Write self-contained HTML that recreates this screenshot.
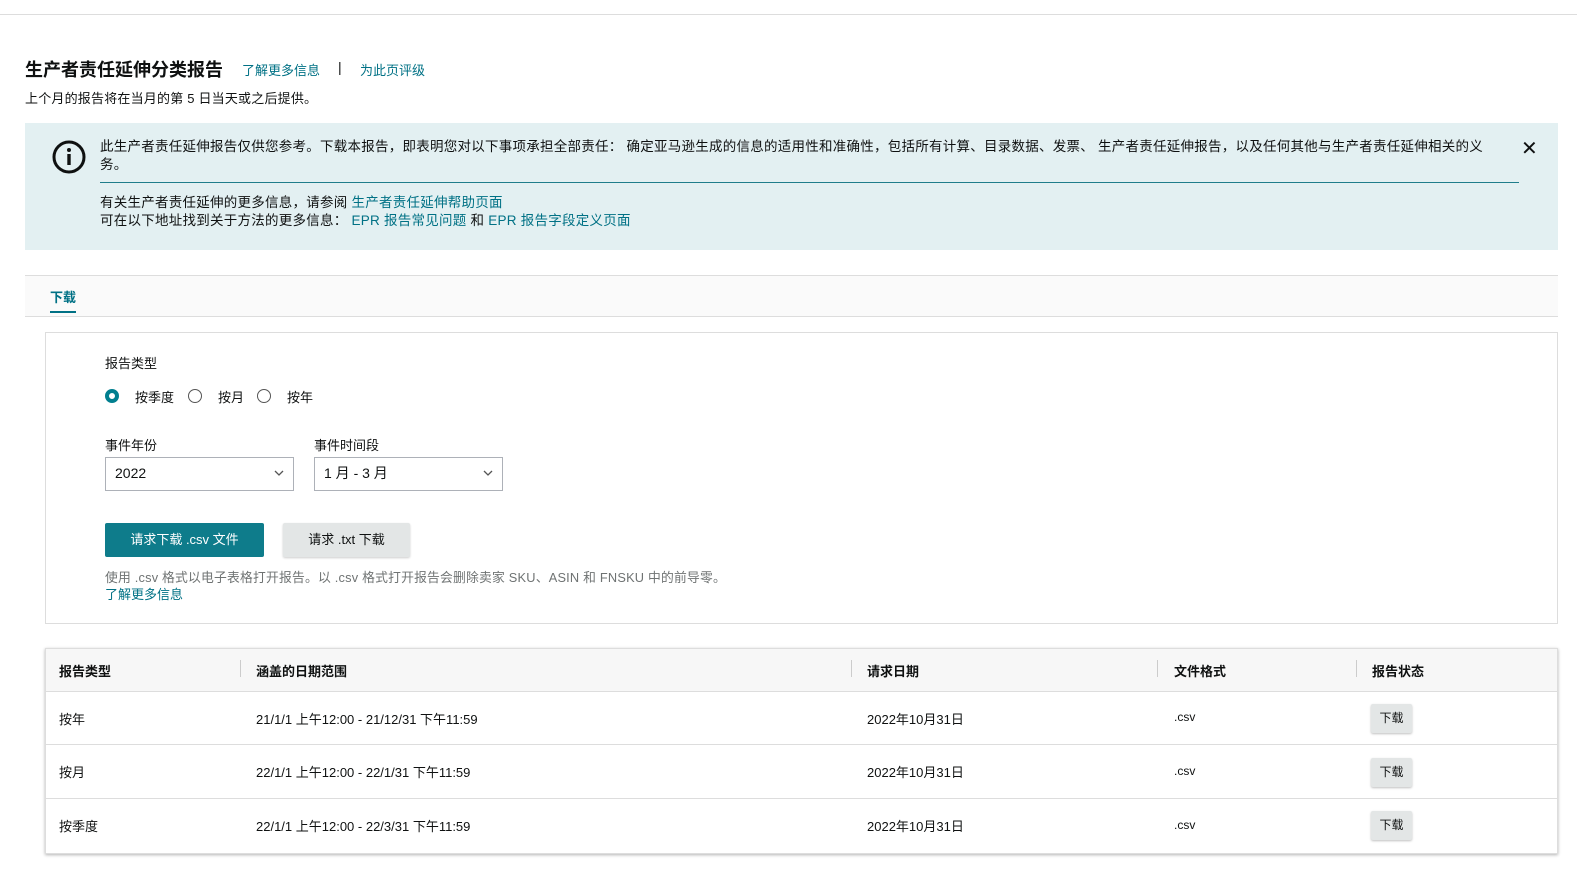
<!DOCTYPE html>
<html><head><meta charset="utf-8"><style>
*{box-sizing:border-box;margin:0;padding:0}
body{width:1577px;height:886px;background:#fff;font-family:"Liberation Sans","Noto Sans CJK SC",sans-serif;color:#0f1111;position:relative;overflow:hidden;font-size:13px}
.a{position:absolute;white-space:nowrap}
.lk{color:#007185}
.sel{position:absolute;height:34px;width:189px;border:1px solid #adb1b8;background:#fff;padding:0 9px;line-height:31px;font-size:14px}
.sel svg{position:absolute;right:9px;top:12px}
.radio{position:absolute;width:14px;height:14px;border-radius:50%;border:1px solid #555}
.row{position:absolute;left:45px;width:1512px;height:53px;border-top:1px solid #ddd}
.btn{position:absolute;width:41px;height:29px;background:#e3e6e6;border-radius:2px;box-shadow:0 1px 2px rgba(0,0,0,.25);font-size:12px;text-align:center;line-height:29px;left:1371px}
</style></head><body>
<div class="a" style="left:0;top:14px;width:1577px;border-top:1px solid #ddd"></div>
<div class="a" style="left:25px;top:56px;font-size:18px;font-weight:bold">生产者责任延伸分类报告</div>
<div class="a lk" style="left:242px;top:60px;font-size:13px">了解更多信息</div>
<div class="a" style="left:338px;top:59px;font-size:14px">|</div>
<div class="a lk" style="left:360px;top:60px;font-size:13px">为此页评级</div>
<div class="a" style="left:25px;top:88px;font-size:13px;letter-spacing:0.2px">上个月的报告将在当月的第 5 日当天或之后提供。</div>

<div class="a" style="left:25px;top:123px;width:1533px;height:127px;background:#e3f0f2"></div>
<svg class="a" style="left:51px;top:139px" width="36" height="36" viewBox="0 0 36 36"><circle cx="18" cy="18" r="15" fill="none" stroke="#0f1111" stroke-width="3"/><circle cx="18" cy="11" r="2" fill="#0f1111"/><rect x="16.3" y="15" width="3.4" height="11" fill="#0f1111"/></svg>
<div class="a" style="left:100px;top:138px;font-size:13.5px;letter-spacing:0.25px;line-height:18px">此生产者责任延伸报告仅供您参考。下载本报告，即表明您对以下事项承担全部责任： 确定亚马逊生成的信息的适用性和准确性，包括所有计算、目录数据、发票、 生产者责任延伸报告，以及任何其他与生产者责任延伸相关的义<br>务。</div>
<div class="a" style="left:1521px;top:136px;font-size:20px">✕</div>
<div class="a" style="left:100px;top:182px;width:1419px;border-top:1px solid #1f7d8b"></div>
<div class="a" style="left:100px;top:191px;font-size:13.5px;letter-spacing:0.25px">有关生产者责任延伸的更多信息，请参阅 <span class="lk">生产者责任延伸帮助页面</span></div>
<div class="a" style="left:100px;top:209px;font-size:13.5px;letter-spacing:0.25px">可在以下地址找到关于方法的更多信息： <span class="lk">EPR 报告常见问题</span> 和 <span class="lk">EPR 报告字段定义页面</span></div>

<div class="a" style="left:25px;top:275px;width:1533px;height:42px;background:#fafafa;border-top:1px solid #ddd;border-bottom:1px solid #ddd"></div>
<div class="a lk" style="left:50px;top:287px;font-size:13px;font-weight:bold">下载</div>
<div class="a" style="left:50px;top:311px;width:26px;height:2px;background:#007185"></div>

<div class="a" style="left:45px;top:332px;width:1513px;height:292px;border:1px solid #ddd"></div>
<div class="a" style="left:105px;top:353px;font-size:13px">报告类型</div>
<div class="radio" style="left:105px;top:389px;border:4px solid #017f8f"></div>
<div class="a" style="left:135px;top:387px;font-size:13px">按季度</div>
<div class="radio" style="left:188px;top:389px"></div>
<div class="a" style="left:218px;top:387px;font-size:13px">按月</div>
<div class="radio" style="left:257px;top:389px"></div>
<div class="a" style="left:287px;top:387px;font-size:13px">按年</div>
<div class="a" style="left:105px;top:435px;font-size:13px">事件年份</div>
<div class="a" style="left:314px;top:435px;font-size:13px">事件时间段</div>
<div class="sel" style="left:105px;top:457px">2022<svg width="10" height="7" viewBox="0 0 10 7"><path d="M1 1l4 4 4-4" fill="none" stroke="#555" stroke-width="1.3"/></svg></div>
<div class="sel" style="left:314px;top:457px">1 月 - 3 月<svg width="10" height="7" viewBox="0 0 10 7"><path d="M1 1l4 4 4-4" fill="none" stroke="#555" stroke-width="1.3"/></svg></div>
<div class="a" style="left:105px;top:523px;width:159px;height:34px;background:#0e7c8b;color:#fff;text-align:center;line-height:33px;font-size:13px;border-radius:2px">请求下载 .csv 文件</div>
<div class="a" style="left:283px;top:523px;width:127px;height:34px;background:#e3e6e6;text-align:center;line-height:33px;font-size:13px;border-radius:2px;box-shadow:0 1px 2px rgba(0,0,0,.2)">请求 .txt 下载</div>
<div class="a" style="left:105px;top:567px;font-size:12.8px;letter-spacing:0.2px;color:#6f7373">使用 .csv 格式以电子表格打开报告。以 .csv 格式打开报告会删除卖家 SKU、ASIN 和 FNSKU 中的前导零。</div>
<div class="a lk" style="left:105px;top:584px;font-size:13px">了解更多信息</div>

<div class="a" style="left:45px;top:648px;width:1513px;height:206px;box-shadow:0 1px 3px rgba(0,0,0,.3);border:1px solid #ddd"></div>
<div class="a" style="left:46px;top:649px;width:1511px;height:42px;background:#f7f7f7"></div>
<div class="a" style="left:59px;top:661px;font-weight:bold">报告类型</div>
<div class="a" style="left:240px;top:660px;height:17px;border-left:1px solid #ccc"></div>
<div class="a" style="left:256px;top:661px;font-weight:bold">涵盖的日期范围</div>
<div class="a" style="left:851px;top:660px;height:17px;border-left:1px solid #ccc"></div>
<div class="a" style="left:867px;top:661px;font-weight:bold">请求日期</div>
<div class="a" style="left:1157px;top:660px;height:17px;border-left:1px solid #ccc"></div>
<div class="a" style="left:1174px;top:661px;font-weight:bold">文件格式</div>
<div class="a" style="left:1356px;top:660px;height:17px;border-left:1px solid #ccc"></div>
<div class="a" style="left:1372px;top:661px;font-weight:bold">报告状态</div>

<div class="row" style="top:691px"></div>
<div class="row" style="top:744px"></div>
<div class="row" style="top:798px"></div>
<div class="a" style="left:59px;top:709px">按年</div>
<div class="a" style="left:256px;top:709px">21/1/1 上午12:00 - 21/12/31 下午11:59</div>
<div class="a" style="left:867px;top:709px">2022年10月31日</div>
<div class="a" style="left:1174px;top:710px;font-size:12px">.csv</div>
<div class="btn" style="top:704px">下载</div>
<div class="a" style="left:59px;top:762px">按月</div>
<div class="a" style="left:256px;top:762px">22/1/1 上午12:00 - 22/1/31 下午11:59</div>
<div class="a" style="left:867px;top:762px">2022年10月31日</div>
<div class="a" style="left:1174px;top:764px;font-size:12px">.csv</div>
<div class="btn" style="top:758px">下载</div>
<div class="a" style="left:59px;top:816px">按季度</div>
<div class="a" style="left:256px;top:816px">22/1/1 上午12:00 - 22/3/31 下午11:59</div>
<div class="a" style="left:867px;top:816px">2022年10月31日</div>
<div class="a" style="left:1174px;top:818px;font-size:12px">.csv</div>
<div class="btn" style="top:811px">下载</div>
</body></html>
